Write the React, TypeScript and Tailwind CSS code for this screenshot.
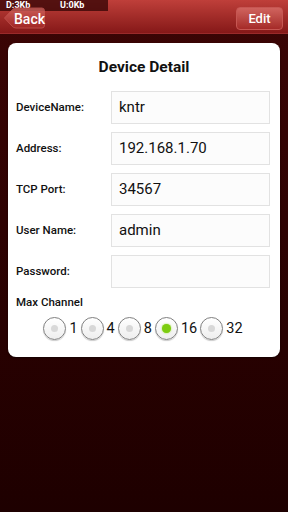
import React from "react";

const font = { fontFamily: "Roboto, 'Liberation Sans', sans-serif" };

function Field({ label, value }: { label: string; value: string }) {
  return (
    <div className="flex items-center h-[33px]">
      <div className="w-[103px] text-[11.5px] font-medium text-[#111] pl-[8px]">{label}</div>
      <div className="flex-1 h-[33px] mr-[10px] border border-[#e2e2e2] bg-[#fcfcfc] flex items-center pl-[7px] text-[15px] text-[#111]">
        {value}
      </div>
    </div>
  );
}

function Radio({ checked, label }: { checked?: boolean; label: string }) {
  return (
    <div className="flex items-center">
      <div className="w-[23px] h-[23px] rounded-full border border-[#808080] bg-gradient-to-b from-[#ffffff] to-[#eeeeee] flex items-center justify-center shadow-[0_1px_1px_rgba(0,0,0,0.2)]">
        {checked ? (
          <div className="w-[9px] h-[9px] rounded-full bg-[#7ccc10] shadow-[0_0_2px_#9be030]" />
        ) : (
          <div className="w-[7px] h-[7px] rounded-full bg-[#d8d8d8]" />
        )}
      </div>
      <span className="ml-[3px] text-[14.5px] text-[#111]">{label}</span>
    </div>
  );
}

export default function App() {
  return (
    <div style={font} className="w-[288px] h-[512px] overflow-hidden bg-gradient-to-b from-[#3c0505] to-[#1e0000] relative">
      <div className="h-[34px] bg-gradient-to-b from-[#bf3f3a] to-[#861818] relative border-b border-[#9a2a2a]">
        <div className="absolute left-0 top-0 w-[108px] h-[11px] bg-[#3a0606]/80 text-[9px] font-bold text-white leading-[11px]">
          <span className="absolute left-[6px]">D:3Kb</span>
          <span className="absolute left-[60px]">U:0Kb</span>
        </div>
        <div className="absolute left-[4px] top-[7px] h-[22px] w-[41px]">
          <svg width="41" height="22" className="absolute inset-0">
            <defs>
              <linearGradient id="bb" x1="0" y1="0" x2="0" y2="1">
                <stop offset="0" stopColor="#d46a64" />
                <stop offset="1" stopColor="#a82a28" />
              </linearGradient>
            </defs>
            <path d="M0.5 11 L8 3 Q9.5 1 12 1 L38 1 Q40.5 1 40.5 4 L40.5 18 Q40.5 21 38 21 L12 21 Q9.5 21 8 19 Z" fill="url(#bb)" stroke="#c95a55" strokeWidth="1" opacity="0.75" />
          </svg>
          <span className="absolute left-[10px] top-[2px] text-[14px] font-medium text-white">Back</span>
        </div>
        <div className="absolute right-[5px] top-[7px] w-[47px] h-[23px] rounded-[4px] bg-gradient-to-b from-[#d0635e] to-[#a52a28] border border-[#c65652] flex items-center justify-center text-[13px] font-medium text-white">
          Edit
        </div>
      </div>
      <div className="mx-[8px] mt-[9px] h-[314px] bg-white rounded-[8px] shadow-[0_1px_2px_rgba(0,0,0,0.5)]">
        <div className="h-[48px] flex items-center justify-center pt-[2px] text-[15.5px] font-bold text-[#111]">Device Detail</div>
        <div className="flex flex-col gap-[8px]">
          <Field label="DeviceName:" value="kntr" />
          <Field label="Address:" value="192.168.1.70" />
          <Field label="TCP Port:" value="34567" />
          <Field label="User Name:" value="admin" />
          <Field label="Password:" value="" />
        </div>
        <div className="pl-[8px] mt-[6px] text-[11.5px] font-medium text-[#111]">Max Channel</div>
        <div className="flex justify-center gap-[3px] mt-[6px] pr-[2px]">
          <Radio label="1" />
          <Radio label="4" />
          <Radio label="8" />
          <Radio label="16" checked />
          <Radio label="32" />
        </div>
      </div>
    </div>
  );
}
